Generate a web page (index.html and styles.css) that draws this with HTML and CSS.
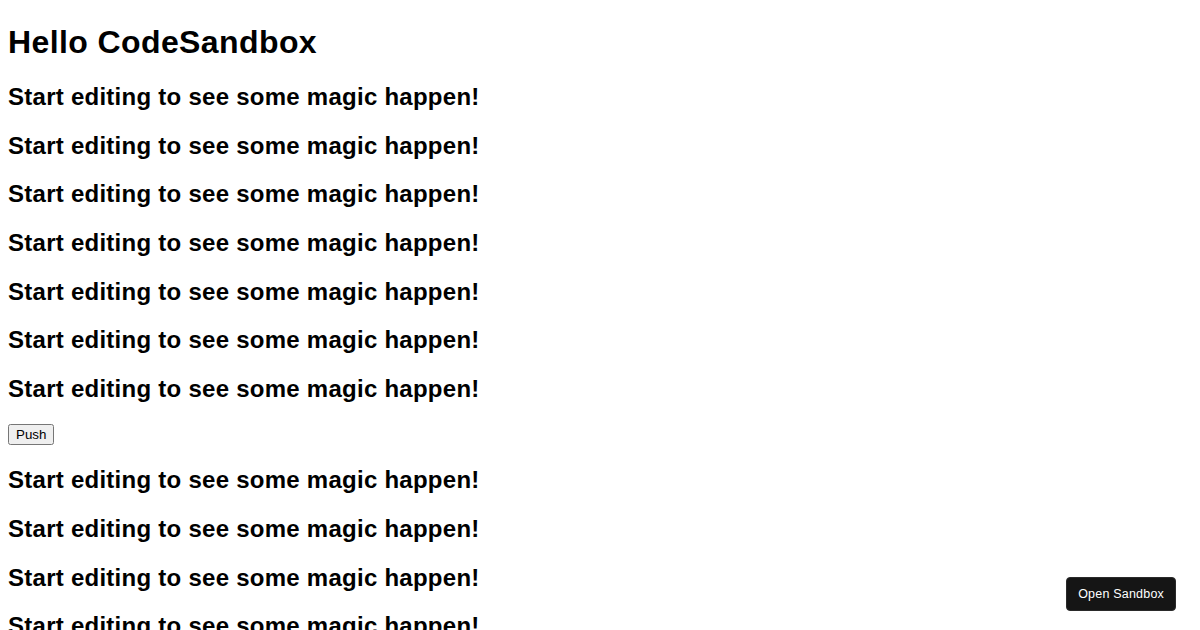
FILE: index.html
```html
<!DOCTYPE html>
<html lang="en">
<head>
    <meta charset="UTF-8">
    <meta name="viewport" content="width=device-width, initial-scale=1.0">
    <title>CodeSandbox</title>
    <link rel="stylesheet" href="styles.css">
</head>
<body>
    <div class="App">
        <h1>Hello CodeSandbox</h1>
        <h2>Start editing to see some magic happen!</h2>
        <h2>Start editing to see some magic happen!</h2>
        <h2>Start editing to see some magic happen!</h2>
        <h2>Start editing to see some magic happen!</h2>
        <h2>Start editing to see some magic happen!</h2>
        <h2>Start editing to see some magic happen!</h2>
        <h2>Start editing to see some magic happen!</h2>
        <button class="push-btn">Push</button>
        <h2>Start editing to see some magic happen!</h2>
        <h2>Start editing to see some magic happen!</h2>
        <h2>Start editing to see some magic happen!</h2>
        <h2>Start editing to see some magic happen!</h2>
        <h2>Start editing to see some magic happen!</h2>
    </div>
    <a class="open-sandbox" href="#">Open Sandbox</a>
</body>
</html>
```

FILE: styles.css
```css
body {
    font-family: "Liberation Sans", Arial, sans-serif;
    color: #000;
}
h1 {
    line-height: 1.2;
    letter-spacing: 0.4px;
    margin-top: 15px;
}
h2 {
    line-height: 1.2;
    letter-spacing: 0.26px;
}
.push-btn {
    font-family: "Liberation Sans", Arial, sans-serif;
    font-size: 13.33px;
    margin-bottom: 1.5px;
}
.open-sandbox {
    position: fixed;
    right: 24px;
    bottom: 19px;
    background: #151515;
    color: #fff;
    font-family: "Liberation Sans", Arial, sans-serif;
    font-size: 12.5px;
    letter-spacing: 0.2px;
    text-decoration: none;
    padding: 9px 11px;
    border-radius: 4px;
    border: 1px solid #2a2a2a;
}
```
